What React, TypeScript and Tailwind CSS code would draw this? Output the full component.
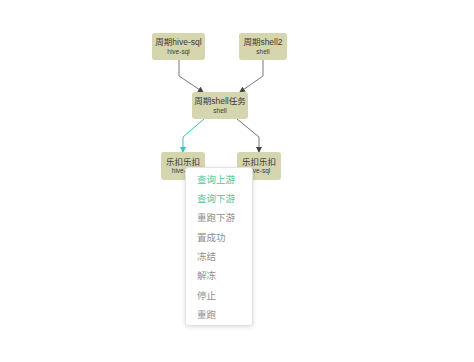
import React from "react"

type Node = { id: string; title: string; sub: string; x: number; y: number; w: number; h: number }

const nodes: Node[] = [
  { id: "a", title: "周期hive-sql", sub: "hive-sql", x: 152, y: 33, w: 53, h: 27 },
  { id: "b", title: "周期shell2", sub: "shell", x: 239, y: 33, w: 48, h: 27 },
  { id: "c", title: "周期shell任务", sub: "shell", x: 192, y: 92, w: 56, h: 27 },
  { id: "d", title: "乐扣乐扣", sub: "hive-sql", x: 161, y: 152, w: 44, h: 28 },
  { id: "e", title: "乐扣乐扣", sub: "hive-sql", x: 237, y: 152, w: 44, h: 28 },
]

const menu = [
  { label: "查询上游", active: true },
  { label: "查询下游", active: true },
  { label: "重跑下游", active: false },
  { label: "置成功", active: false },
  { label: "冻结", active: false },
  { label: "解冻", active: false },
  { label: "停止", active: false },
  { label: "重跑", active: false },
]

function Edges() {
  return (
    <svg className="absolute left-0 top-0" width={474} height={362}>
      <defs>
        <marker id="ag" markerWidth="6" markerHeight="6" refX="5" refY="3" orient="auto">
          <path d="M0,0 L6,3 L0,6 Z" fill="#444" />
        </marker>
        <marker id="ac" markerWidth="6" markerHeight="6" refX="5" refY="3" orient="auto">
          <path d="M0,0 L6,3 L0,6 Z" fill="#2ec7c9" />
        </marker>
      </defs>
      <polyline points="179,60 179,76 203,92" fill="none" stroke="#777" strokeWidth="1" markerEnd="url(#ag)" />
      <polyline points="263,60 263,76 240,92" fill="none" stroke="#777" strokeWidth="1" markerEnd="url(#ag)" />
      <polyline points="204,119 183,137 183,152" fill="none" stroke="#2ec7c9" strokeWidth="1" markerEnd="url(#ac)" />
      <polyline points="237,119 259,137 259,152" fill="none" stroke="#777" strokeWidth="1" markerEnd="url(#ag)" />
    </svg>
  )
}

export default function App() {
  return (
    <div className="relative w-[474px] h-[362px] bg-white overflow-hidden font-['Liberation_Sans','Noto_Sans_CJK_SC',sans-serif]">
      <Edges />
      {nodes.map((n) => (
        <div
          key={n.id}
          className="absolute flex flex-col items-center justify-center rounded-[3px] bg-[#d5d5ae] text-[#3a3a3a] leading-none overflow-hidden"
          style={{ left: n.x, top: n.y, width: n.w, height: n.h }}
        >
          <span className="text-[8.5px] whitespace-nowrap">{n.title}</span>
          <span className="text-[6.5px] mt-[2px] whitespace-nowrap">{n.sub}</span>
        </div>
      ))}
      <div className="absolute left-[185px] top-[167px] w-[68px] h-[159px] pt-[2px] bg-white border border-[#e3e3e3] rounded-[3px] shadow-[0_1px_4px_rgba(0,0,0,0.15)] flex flex-col">
        {menu.map((m) => (
          <div
            key={m.label}
            className={`h-[19.8px] flex items-center pl-[11px] text-[9.5px] ${m.active ? "text-[#55c69e]" : "text-[#8f8f8f]"}`}
          >
            {m.label}
          </div>
        ))}
      </div>
    </div>
  )
}
